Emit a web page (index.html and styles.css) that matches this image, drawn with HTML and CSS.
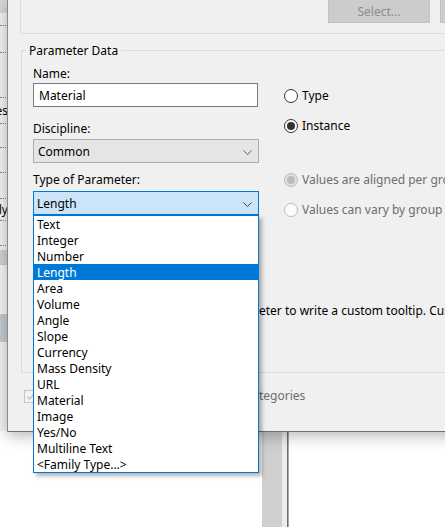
FILE: index.html
```html
<!DOCTYPE html>
<html>
<head>
<meta charset="utf-8">
<link rel="stylesheet" href="styles.css">
</head>
<body>
<div class="bgwin">
  <div class="bgrow r1"></div>
  <div class="bgrow r2"></div>
  <div class="bgrow r3"></div>
  <div class="bgrow r4">Properties</div>
  <div class="bgrow r5"></div>
  <div class="bgrow r6"></div>
  <div class="bgrow r7"></div>
  <div class="bgrow r8">Family</div>
  <div class="bgrow r9"></div>
  <div class="bgblock b1"></div>
  <div class="bgblock b2"></div>
  <div class="bgblock b3"></div>
</div>
<div class="bgstrip"></div>
<div class="dialog">
  <div class="topgroup">
    <div class="btn">Select...</div>
    <div class="btn btn2"></div>
  </div>
  <fieldset class="group">
    <legend>Parameter Data</legend>
    <div class="gbody">
      <div class="cols">
        <div class="leftcol">
          <div class="lbl">Name:</div>
          <div class="input">Material</div>
          <div class="lbl l2">Discipline:</div>
          <div class="combo"><span>Common</span><svg class="chev" width="9" height="5" viewBox="0 0 9 5"><polyline points="0.5,0.5 4.5,4.5 8.5,0.5" fill="none" stroke="#606060" stroke-width="1"/></svg></div>
          <div class="lbl l3">Type of Parameter:</div>
          <div class="combo open"><span>Length</span><svg class="chev" width="9" height="5" viewBox="0 0 9 5"><polyline points="0.5,0.5 4.5,4.5 8.5,0.5" fill="none" stroke="#404040" stroke-width="1"/></svg></div>
        </div>
        <div class="rightcol">
          <div class="radio"><span class="rdot"></span><span>Type</span></div>
          <div class="radio rr2"><span class="rdot on"></span><span>Instance</span></div>
          <div class="radio dis rr3"><span class="rdot on"></span><span>Values are aligned per group type</span></div>
          <div class="radio dis rr4"><span class="rdot"></span><span>Values can vary by group instance</span></div>
        </div>
      </div>
      <div class="tip"><span class="hid">Edit this param</span><span>eter to write a custom tooltip. Custom tooltips have a limit of 250 characters&gt;</span></div>
    </div>
  </fieldset>
  <div class="checkrow">
    <span class="cbox"><svg width="11" height="11" viewBox="0 0 11 11"><polyline points="2,5.5 4.5,8 9,3" fill="none" stroke="#c4c4c4" stroke-width="1.3"/></svg></span>
    <span class="hid2">Add to all ca</span><span>tegories</span>
  </div>
  <ul class="list">
    <li>Text</li>
    <li>Integer</li>
    <li>Number</li>
    <li class="sel">Length</li>
    <li>Area</li>
    <li>Volume</li>
    <li>Angle</li>
    <li>Slope</li>
    <li>Currency</li>
    <li>Mass Density</li>
    <li>URL</li>
    <li>Material</li>
    <li>Image</li>
    <li>Yes/No</li>
    <li>Multiline Text</li>
    <li>&lt;Family Type...&gt;</li>
  </ul>
</div>
</body>
</html>
```

FILE: styles.css
```css
* { box-sizing: border-box; }
html, body { margin: 0; padding: 0; }
body {
  width: 445px;
  height: 527px;
  overflow: hidden;
  position: relative;
  background: #ffffff;
  font-family: "Noto Sans", "Liberation Sans", sans-serif;
  font-size: 12px;
  line-height: 16px;
  color: #000;
}

/* background window on the left */
.bgwin {
  position: absolute;
  left: 0;
  top: 0;
  width: 8px;
  height: 431px;
  background: #f3f3f3;
  overflow: hidden;
}
.bgrow {
  border-bottom: 1px dotted #8a8a8a;
  display: flex;
  align-items: center;
  justify-content: flex-end;
  white-space: nowrap;
  font-size: 12px;
  color: #000;
}
.r1 { height: 26px; background: linear-gradient(#d6d6d6 0 13px, transparent 13px); }
.r2 { height: 27px; }
.r3 { height: 45px; }
.r4 { height: 26px; }
.r5 { height: 24px; }
.r6 { height: 25px; }
.r7 { height: 26px; }
.r8 { height: 22px; }
.r9 { height: 25px; }
.bgblock { width: 100%; }
.b1 { height: 14px; margin-top: 4px; background: #d2d2d2; }
.b2 { height: 50px; background: #f6f6f6; border-top: 1px solid #c8c8c8; }
.b3 { height: 28px; background: #c5cad3; }

/* background window below the dialog */
.bgstrip {
  position: absolute;
  left: 262px;
  top: 432px;
  width: 27px;
  height: 95px;
  background: linear-gradient(to right, #cfcfcf 0 20px, #ececec 20px 25px, #6f6f6f 25px 26px, #a8a8a8 26px 27px);
}

/* dialog */
.dialog {
  position: absolute;
  left: 7px;
  top: 0;
  width: 470px;
  height: 432px;
  background: #f0f0f0;
  border-left: 1px solid #8a8a8a;
  border-bottom: 1px solid #6e6e6e;
  box-shadow: 0 4px 14px rgba(0, 0, 0, 0.28);
}

.topgroup {
  margin-left: 12px;
  height: 34px;
  border-left: 1px solid #dcdcdc;
  border-bottom: 1px solid #dcdcdc;
  display: flex;
  gap: 10px;
  padding-left: 307px;
  align-items: flex-start;
}
.btn {
  height: 23px;
  width: 102px;
  flex: none;
  background: #cccccc;
  border: 1px solid #c2c2c2;
  border-top: none;
  color: #8c8c8c;
  display: flex;
  align-items: center;
  justify-content: center;
  padding-top: 2px;
}
.btn2 { width: 80px; }

.group {
  margin: 8px 0 0 13px;
  padding: 0;
  border: 1px solid #dcdcdc;
  min-width: 0;
  width: 480px;
}
.group legend {
  padding: 0 3px;
  margin-left: 4px;
  line-height: 17px;
}
.gbody {
  padding: 6px 0 53px 11px;
}

.cols { display: flex; align-items: flex-start; }
.leftcol { width: 226px; flex: none; }
.lbl { height: 16px; line-height: 18px; white-space: nowrap; }
.l2 { margin-top: 13px; }
.l3 { margin-top: 8px; }
.input {
  margin-top: 2px;
  height: 24px;
  width: 225px;
  border: 1px solid #7a7a7a;
  background: #fff;
  padding: 0 5px;
  line-height: 24px;
}
.combo {
  margin-top: 3px;
  height: 24px;
  width: 226px;
  border: 1px solid #adadad;
  background: #e5e5e5;
  padding: 2px 6px 0 4px;
  display: flex;
  align-items: center;
  justify-content: space-between;
}
.combo.open {
  margin-top: 4px;
  background: #cce4f7;
  border-color: #0078d7;
  padding-left: 3px;
}
.chev { display: block; }

.rightcol { margin-left: 25px; padding-top: 23px; }
.radio {
  display: flex;
  align-items: center;
  gap: 4px;
  height: 16px;
  white-space: nowrap;
}
.rr2 { margin-top: 14px; }
.rr3 { margin-top: 38px; }
.rr4 { margin-top: 14px; }
.rdot {
  width: 14px;
  height: 14px;
  flex: none;
  border-radius: 50%;
  border: 1px solid #333;
  background: #fff;
  display: flex;
  align-items: center;
  justify-content: center;
}
.rdot.on::after {
  content: "";
  width: 8px;
  height: 8px;
  border-radius: 50%;
  background: #333;
}
.radio.dis { color: #6d6d6d; }
.radio.dis .rdot { border-color: #bcbcbc; background: #fcfcfc; }
.radio.dis .rdot.on { background: #e0e0e0; }
.radio.dis .rdot.on::after { background: #bcbcbc; }

.tip {
  margin-top: 85px;
  display: flex;
  white-space: nowrap;
  height: 16px;
}
.hid {
  width: 226px;
  flex: none;
  overflow: hidden;
  text-align: right;
}

.checkrow {
  margin: 15px 0 0 16px;
  display: flex;
  align-items: center;
  height: 16px;
  white-space: nowrap;
  color: #6d6d6d;
}
.cbox {
  width: 13px;
  height: 13px;
  flex: none;
  border: 1px solid #c4c4c4;
  background: #f4f4f4;
  display: flex;
  align-items: center;
  justify-content: center;
  margin-right: 4px;
}
.cbox svg { display: block; }
.hid2 {
  width: 218px;
  flex: none;
  overflow: hidden;
  text-align: right;
}

/* dropdown list */
.list {
  position: absolute;
  left: 25px;
  top: 215px;
  width: 226px;
  margin: 0;
  padding: 0;
  list-style: none;
  background: #fff;
  border: 1px solid #0078d7;
  box-shadow: 3px 3px 4px rgba(0, 0, 0, 0.3);
}
.list li {
  height: 16px;
  line-height: 18px;
  padding-left: 3px;
  white-space: nowrap;
}
.list li.sel {
  background: #0078d7;
  color: #fff;
}
```
